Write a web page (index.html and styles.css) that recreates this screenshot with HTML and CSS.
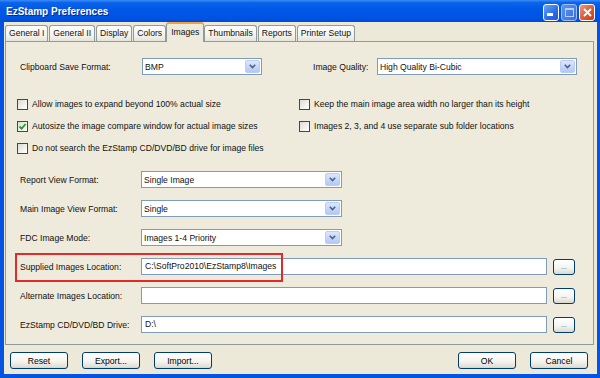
FILE: index.html
```html
<!DOCTYPE html>
<html>
<head>
    <meta charset="UTF-8">
    <title>EzStamp Preferences</title>
    <link rel="stylesheet" href="styles.css">
</head>
<body>
    <div class="window">
        <div class="titlebar">
            <span class="title">EzStamp Preferences</span>
            <div class="caption-buttons">
                <span class="cap-btn">
                    <svg width="8" height="8" viewBox="0 0 8 8"><rect x="0" y="5" width="6" height="3" fill="#fff"/></svg>
                </span>
                <span class="cap-btn disabled">
                    <svg width="9" height="9" viewBox="0 0 9 9"><rect x="0.5" y="0.5" width="8" height="8" fill="none" stroke="#b9cdf6"/><rect x="0" y="0" width="9" height="2" fill="#b9cdf6"/></svg>
                </span>
                <span class="cap-btn close">
                    <svg width="9" height="9" viewBox="0 0 9 9"><path d="M1 1 L8 8 M8 1 L1 8" stroke="#fff" stroke-width="1.8"/></svg>
                </span>
            </div>
        </div>

        <div class="client">
            <div class="tabs">
                <div class="tab">General I</div>
                <div class="tab">General II</div>
                <div class="tab">Display</div>
                <div class="tab">Colors</div>
                <div class="tab active">Images</div>
                <div class="tab">Thumbnails</div>
                <div class="tab">Reports</div>
                <div class="tab">Printer Setup</div>
            </div>

            <div class="panel">
                <div class="row-top">
                    <label class="lbl">Clipboard Save Format:</label>
                    <div class="combo combo-small">
                        <span class="value">BMP</span>
                        <span class="arrow"><svg width="7" height="5" viewBox="0 0 7 5"><path d="M0.8 0.8 L3.5 3.5 L6.2 0.8" fill="none" stroke="#4d6185" stroke-width="1.6"/></svg></span>
                    </div>
                    <label class="lbl lbl-quality">Image Quality:</label>
                    <div class="combo combo-quality">
                        <span class="value">High Quality Bi-Cubic</span>
                        <span class="arrow"><svg width="7" height="5" viewBox="0 0 7 5"><path d="M0.8 0.8 L3.5 3.5 L6.2 0.8" fill="none" stroke="#4d6185" stroke-width="1.6"/></svg></span>
                    </div>
                </div>

                <div class="checks">
                    <div class="check-col">
                        <div class="check"><span class="box"></span>Allow images to expand beyond 100% actual size</div>
                        <div class="check"><span class="box"><svg width="9" height="9" viewBox="0 0 9 9"><path d="M1.5 4.5 L3.6 6.6 L7.6 2" fill="none" stroke="#21a121" stroke-width="1.8"/></svg></span>Autosize the image compare window for actual image sizes</div>
                        <div class="check"><span class="box"></span>Do not search the EzStamp CD/DVD/BD drive for image files</div>
                    </div>
                    <div class="check-col">
                        <div class="check"><span class="box"></span>Keep the main image area width no larger than its height</div>
                        <div class="check"><span class="box"></span>Images 2, 3, and 4 use separate sub folder locations</div>
                    </div>
                </div>

                <div class="fields">
                    <div class="field">
                        <label class="lbl">Report View Format:</label>
                        <div class="combo combo-wide">
                            <span class="value">Single Image</span>
                            <span class="arrow"><svg width="7" height="5" viewBox="0 0 7 5"><path d="M0.8 0.8 L3.5 3.5 L6.2 0.8" fill="none" stroke="#4d6185" stroke-width="1.6"/></svg></span>
                        </div>
                    </div>
                    <div class="field">
                        <label class="lbl">Main Image View Format:</label>
                        <div class="combo combo-wide">
                            <span class="value">Single</span>
                            <span class="arrow"><svg width="7" height="5" viewBox="0 0 7 5"><path d="M0.8 0.8 L3.5 3.5 L6.2 0.8" fill="none" stroke="#4d6185" stroke-width="1.6"/></svg></span>
                        </div>
                    </div>
                    <div class="field">
                        <label class="lbl">FDC Image Mode:</label>
                        <div class="combo combo-wide">
                            <span class="value">Images 1-4 Priority</span>
                            <span class="arrow"><svg width="7" height="5" viewBox="0 0 7 5"><path d="M0.8 0.8 L3.5 3.5 L6.2 0.8" fill="none" stroke="#4d6185" stroke-width="1.6"/></svg></span>
                        </div>
                    </div>
                    <div class="field">
                        <label class="lbl">Supplied Images Location:</label>
                        <div class="text-input">C:\SoftPro2010\EzStamp8\Images</div>
                        <button class="browse">...</button>
                    </div>
                    <div class="field">
                        <label class="lbl">Alternate Images Location:</label>
                        <div class="text-input"></div>
                        <button class="browse">...</button>
                    </div>
                    <div class="field">
                        <label class="lbl">EzStamp CD/DVD/BD Drive:</label>
                        <div class="text-input">D:\</div>
                        <button class="browse">...</button>
                    </div>
                </div>

                <div class="highlight"></div>
            </div>

            <div class="buttons">
                <button class="btn">Reset</button>
                <button class="btn">Export...</button>
                <button class="btn">Import...</button>
                <span class="spacer"></span>
                <button class="btn">OK</button>
                <button class="btn">Cancel</button>
            </div>
        </div>
    </div>
</body>
</html>
```

FILE: styles.css
```css
body {
    margin: 0;
    font-family: "Liberation Sans", Arial, sans-serif;
    font-size: 8.6px;
    color: #111;
    background: #fff;
}
.window {
    width: 600px;
    height: 378px;
    display: flex;
    flex-direction: column;
    background: #0553e1;
    overflow: hidden;
}
.titlebar {
    height: 22px;
    flex: none;
    display: flex;
    align-items: center;
    padding: 0 5px 0 6px;
    background: linear-gradient(#3a8cf8 0, #0b63ea 12%, #0157e6 45%, #0053e2 85%, #0349cf 100%);
}
.title {
    flex: 1;
    color: #fff;
    font-weight: bold;
    font-size: 10px;
    text-shadow: 1px 1px #0b2a8c;
}
.caption-buttons {
    display: flex;
    gap: 2px;
    margin-top: 2px;
}
.cap-btn {
    width: 16px;
    height: 17px;
    box-sizing: border-box;
    border: 1px solid #fff;
    border-radius: 3px;
    background: linear-gradient(135deg, #6ea6fb, #2b6ae6 60%, #2158d8);
    display: flex;
    align-items: center;
    justify-content: center;
}
.cap-btn.disabled {
    border-color: #9fbcf3;
    background: linear-gradient(135deg, #5a93f2, #3670df);
}
.cap-btn.close {
    background: linear-gradient(135deg, #eb9a7c, #dc5a35 55%, #c83c14);
}

.client {
    flex: 1;
    margin: 0 3px 4px 4px;
    background: #ece9d8;
    display: flex;
    flex-direction: column;
}
.tabs {
    height: 19px;
    flex: none;
    display: flex;
    align-items: flex-end;
    padding-left: 1px;
    gap: 1px;
}
.tab {
    height: 16px;
    box-sizing: border-box;
    padding: 0 3px;
    line-height: 15px;
    border: 1px solid #919b9c;
    border-bottom: none;
    border-radius: 3px 3px 0 0;
    background: linear-gradient(#fefefe, #f4f3ee 60%, #e6e4da);
}
.tab.active {
    height: 20px;
    margin: 0 -1px -1px;
    padding: 0 4px;
    line-height: 17px;
    border-top: 2px solid #f1a33a;
    background: #eeebdc;
    position: relative;
    z-index: 1;
}

.panel {
    position: relative;
    width: 589px;
    height: 304px;
    margin-left: 1px;
    box-sizing: border-box;
    border: 1px solid #919b9c;
    background: #eeebdc;
    padding-top: 16px;
}
.lbl {
    flex: none;
    width: 122px;
}
.row-top {
    display: flex;
    align-items: center;
    height: 17px;
    padding-left: 14px;
}
.lbl-quality {
    width: 64px;
    margin-left: 51px;
}
.combo {
    height: 17px;
    box-sizing: border-box;
    border: 1px solid #7f9db9;
    background: #fff;
    display: flex;
    align-items: center;
    padding: 0 1px 0 2px;
}
.combo .value {
    flex: 1;
}
.combo .arrow {
    width: 15px;
    height: 13px;
    box-sizing: border-box;
    border: 1px solid #bccdf4;
    border-radius: 2px;
    background: linear-gradient(#dde7fd, #c2d4fa 60%, #b3c8f6);
    display: flex;
    align-items: center;
    justify-content: center;
}
.combo-small {
    width: 120px;
}
.combo-quality {
    width: 200px;
}
.combo-wide {
    width: 201px;
}

.checks {
    display: flex;
    margin-top: 18px;
    padding-left: 11px;
}
.check-col {
    width: 282px;
}
.check {
    height: 22px;
    display: flex;
    align-items: center;
    gap: 4px;
}
.box {
    width: 11px;
    height: 11px;
    box-sizing: border-box;
    border: 1px solid #1c5180;
    background: linear-gradient(135deg, #dcdcd4, #f6f6f2 70%, #fff);
    display: flex;
    align-items: center;
    justify-content: center;
}

.fields {
    margin-top: 6px;
}
.field {
    height: 29px;
    display: flex;
    align-items: center;
    padding-left: 14px;
}
.field .lbl {
    width: 121px;
}
.text-input {
    width: 406px;
    height: 17px;
    box-sizing: border-box;
    border: 1px solid #7f9db9;
    background: #fff;
    padding-left: 3px;
    line-height: 15px;
}
.browse {
    width: 22px;
    height: 16px;
    margin-left: 6px;
    padding: 0;
    font: inherit;
    font-size: 7px;
    color: #555;
    border: 1px solid #003c74;
    border-radius: 3px;
    background: linear-gradient(#fff, #f3f3ee 60%, #dcd8cc);
}
.highlight {
    position: absolute;
    left: 9px;
    top: 211px;
    width: 268px;
    height: 29px;
    box-sizing: border-box;
    border: 2px solid #e22a2a;
}

.buttons {
    display: flex;
    gap: 14px;
    margin-top: 7px;
    padding: 0 9px 0 6px;
}
.spacer {
    flex: 1;
}
.btn {
    width: 58px;
    height: 17px;
    padding: 0;
    font: inherit;
    color: #000;
    border: 1px solid #003c74;
    border-radius: 3px;
    background: linear-gradient(#fff, #f5f4ef 55%, #e3e0d5 90%, #d6d0c5);
}
```
